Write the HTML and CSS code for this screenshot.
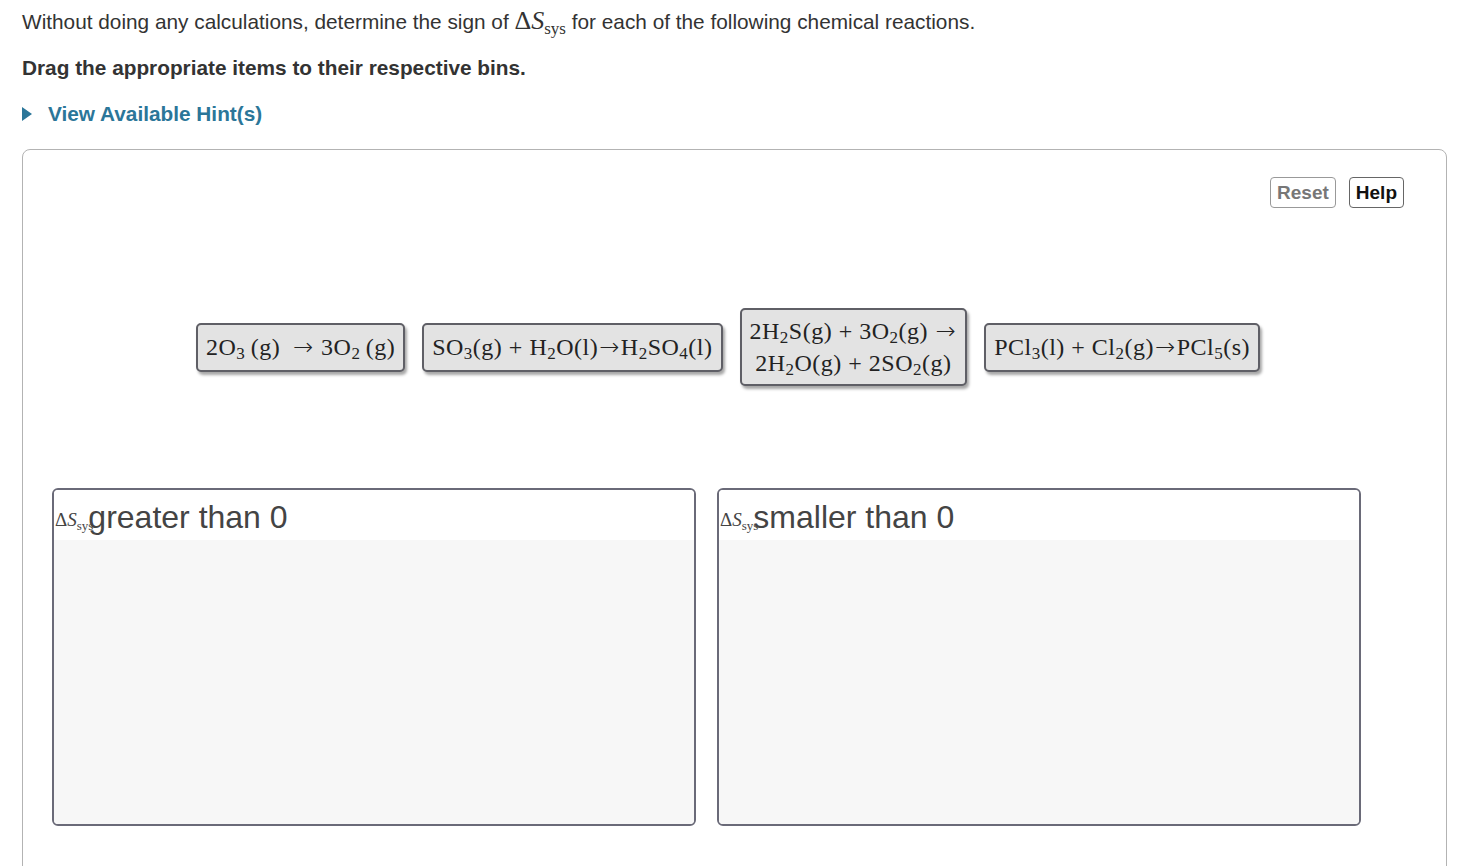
FILE: index.html
```html
<!DOCTYPE html>
<html>
<head>
<meta charset="utf-8">
<link rel="stylesheet" href="styles.css">
</head>
<body>
<p class="intro">Without doing any calculations, determine the sign of <span class="m m-big"><span class="up">Δ</span><i>S</i><sub>sys</sub></span> for each of the following chemical reactions.</p>
<p class="instr">Drag the appropriate items to their respective bins.</p>
<div class="hint"><span class="tri"></span><span class="hint-text">View Available Hint(s)</span></div>
<div class="panel">
  <div class="toolbar">
    <button class="btn btn-reset">Reset</button>
    <button class="btn btn-help">Help</button>
  </div>
  <div class="items">
    <div class="item"><span>2O<sub>3</sub>&#8201;(g) &#8201;<span class="arr">→</span> 3O<sub>2</sub>&#8201;(g)</span></div>
    <div class="item"><span>SO<sub>3</sub>(g) + H<sub>2</sub>O(l)<span class="arr">→</span>H<sub>2</sub>SO<sub>4</sub>(l)</span></div>
    <div class="item item-tall"><span>2H<sub>2</sub>S(g) + 3O<sub>2</sub>(g) <span class="arr">→</span></span><span>2H<sub>2</sub>O(g) + 2SO<sub>2</sub>(g)</span></div>
    <div class="item"><span>PCl<sub>3</sub>(l) + Cl<sub>2</sub>(g)<span class="arr">→</span>PCl<sub>5</sub>(s)</span></div>
  </div>
  <div class="bins">
    <div class="bin">
      <div class="bin-head"><span class="m m-small"><span class="up">Δ</span><i>S</i><sub>sys</sub></span><span class="bin-label">greater than 0</span></div>
      <div class="bin-body"></div>
    </div>
    <div class="bin">
      <div class="bin-head"><span class="m m-small"><span class="up">Δ</span><i>S</i><sub>sys</sub></span><span class="bin-label">smaller than 0</span></div>
      <div class="bin-body"></div>
    </div>
  </div>
</div>
</body>
</html>
```
FILE: styles.css
```css
html, body {
  margin: 0;
  padding: 0;
  background: #fff;
}
body {
  padding: 8px 21px 0 22px;
  font-family: "Liberation Sans", Arial, sans-serif;
  color: #333;
  overflow: hidden;
  height: 858px;
}
.intro {
  margin: 0;
  font-size: 20.8px;
  line-height: 26px;
  color: #333;
}
.m {
  font-family: "Liberation Serif", "DejaVu Serif", serif;
}
.m-big {
  font-size: 26px;
}
.m-big sub {
  font-size: 17px;
  vertical-align: -5px;
  line-height: 0;
}
.up { font-style: normal; }
.instr {
  margin: 20px 0 0 0;
  font-size: 20.8px;
  line-height: 26px;
  font-weight: bold;
  color: #333;
}
.hint {
  margin-top: 20px;
  display: flex;
  align-items: center;
  height: 26px;
}
.tri {
  width: 0;
  height: 0;
  border-top: 7px solid transparent;
  border-bottom: 7px solid transparent;
  border-left: 10px solid #2b7699;
  margin-right: 16px;
}
.hint-text {
  color: #2b7699;
  font-weight: bold;
  font-size: 20.8px;
}
.panel {
  margin-top: 22px;
  border: 1px solid #b3b3b3;
  border-radius: 8px 8px 0 0;
  height: 740px;
  padding: 27px 42px 0 29px;
  box-sizing: border-box;
}
.toolbar {
  display: flex;
  justify-content: flex-end;
  gap: 13px;
}
.btn {
  font-family: "Liberation Sans", Arial, sans-serif;
  font-weight: bold;
  font-size: 19px;
  height: 31px;
  padding: 0 6px;
  background: #fff;
  border: 1px solid #888;
  border-radius: 4px;
  line-height: 29px;
}
.btn-reset { color: #777; border-color: #999; }
.btn-help { color: #111; border-color: #666; }
.items {
  margin-top: 100px;
  display: flex;
  justify-content: center;
  align-items: center;
  gap: 17px;
  height: 78px;
}
.item {
  font-family: "Liberation Serif", "DejaVu Serif", serif;
  font-size: 24px;
  letter-spacing: 0.5px;
  color: #222;
  background: #e3e3e3;
  border: 2px solid #5f5f66;
  border-radius: 5px;
  box-shadow: 2px 3px 3px rgba(0,0,0,0.35);
  padding: 0 8px;
  height: 49px;
  box-sizing: border-box;
  display: flex;
  align-items: center;
  white-space: nowrap;
}
.item sub {
  font-size: 17px;
  vertical-align: -4px;
  line-height: 0;
}
.arr {
  font-family: "DejaVu Sans", sans-serif;
  font-weight: 200;
  font-size: 24px;
  line-height: 0;
  margin: 0 1px;
}
.item-tall {
  height: 78px;
  flex-direction: column;
  justify-content: center;
  line-height: 32px;
}
.bins {
  margin-top: 102px;
  display: flex;
  gap: 21px;
}
.bin {
  width: 644px;
  height: 338px;
  border: 2px solid #6a6a78;
  border-radius: 6px;
  box-sizing: border-box;
  overflow: hidden;
  display: flex;
  flex-direction: column;
}
.bin-head {
  height: 50px;
  box-sizing: border-box;
  padding: 5px 0 0 1px;
  background: #fff;
  display: flex;
  align-items: center;
  white-space: nowrap;
}
.m-small {
  font-size: 19px;
  color: #444;
  margin-right: -5px;
  position: relative;
  top: 2px;
}
.m-small sub {
  font-size: 13px;
  vertical-align: -4px;
  line-height: 0;
}
.bin-label {
  font-size: 32px;
  color: #444;
}
.bin-body {
  flex: 1;
  background: #f7f7f7;
}
```
